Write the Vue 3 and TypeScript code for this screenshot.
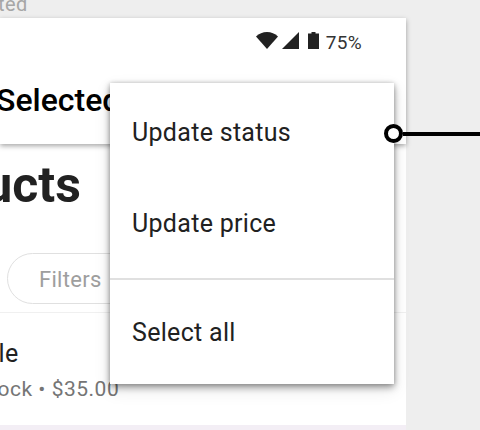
<script setup lang="ts">
const menuItems: string[] = ['Update status', 'Update price']
</script>

<template>
  <div class="page">
    <div class="caption">Selected</div>
    <div class="screen">
      <header class="appbar">
        <div class="status">
          <svg class="icon wifi" width="22" height="17" viewBox="0 0 22 17"><path d="M0 4.500C3 1.600 6.800 0 11 0s8 1.600 11 4.500L11 17z" fill="#212121" /></svg>
          <svg class="icon signal" width="18" height="17" viewBox="0 0 18 17"><path d="M17 0v17H0z" fill="#212121" /></svg>
          <svg class="icon battery" width="11" height="17" viewBox="0 0 11 17"><path d="M3.500 0h4v1.500H11V17H0V1.500h3.500z" fill="#212121" /></svg>
          <span class="pct">75%</span>
        </div>
        <div class="selected">Selected</div>
      </header>
      <h1 class="title">Products</h1>
      <div class="filterbar">
        <div class="pill">Filters</div>
      </div>
      <div class="row">
        <div class="name">Sample</div>
        <div class="meta">In stock • $35.00</div>
      </div>
      <div class="menu">
        <div v-for="m in menuItems" :key="m" class="item">{{ m }}</div>
        <div class="divider"></div>
        <div class="item last">Select all</div>
      </div>
    </div>
    <div class="callout">
      <span class="dot"></span>
      <span class="line"></span>
    </div>
    <div class="footer"></div>
  </div>
</template>

<style>
html, body { margin: 0; background: #eeeeee; }
</style>

<style scoped>
.page {
  position: relative;
  width: 480px;
  height: 430px;
  overflow: hidden;
  background: #eeeeee;
  font-family: Roboto, sans-serif;
}
.caption {
  height: 18px;
  box-sizing: border-box;
  margin-left: -53px;
  display: flex;
  align-items: flex-end;
  overflow: hidden;
  font-size: 20px;
  line-height: 20px;
  letter-spacing: 0.5px;
  color: #a6a6a6;
  padding-bottom: 4px;
}
.screen {
  position: relative;
  width: 406px;
  height: 407px;
  background: #fff;
}
.appbar {
  height: 126px;
  box-shadow: 0 2px 5px rgba(0, 0, 0, 0.35);
  display: flex;
  flex-direction: column;
}
.status {
  height: 46px;
  display: flex;
  align-items: center;
  justify-content: flex-end;
  padding-right: 44px;
}
.icon { margin-bottom: 1px; }
.signal { margin-left: 4px; }
.battery { margin-left: 8px; margin-right: 7px; }
.pct {
  margin-top: 2px;
  font-size: 19px;
  color: #333;
  letter-spacing: 0.3px;
}
.selected {
  margin-top: 18px;
  margin-left: -4px;
  font-size: 32px;
  line-height: 36px;
  font-weight: 500;
  color: #000;
  white-space: nowrap;
}
.title {
  margin: 13px 0 0 -122px;
  font-size: 50px;
  line-height: 56px;
  font-weight: 700;
  color: #212121;
}
.filterbar {
  height: 100px;
  box-sizing: border-box;
  border-bottom: 1px solid #f0f0f0;
  padding: 40px 0 0 7px;
}
.pill {
  width: 140px;
  height: 51px;
  box-sizing: border-box;
  border: 1px solid #e0e0e0;
  border-radius: 26px;
  padding-left: 31px;
  line-height: 51px;
  font-size: 22px;
  letter-spacing: 0.3px;
  color: #9e9e9e;
}
.row {
  padding-top: 25px;
}
.name {
  margin-left: -67px;
  font-size: 25px;
  line-height: 32px;
  letter-spacing: 0.3px;
  color: #212121;
}
.meta {
  margin: 5px 0 0 -45px;
  font-size: 21px;
  line-height: 28px;
  letter-spacing: 0.5px;
  color: #757575;
  white-space: nowrap;
}
.menu {
  position: absolute;
  left: 109.500px;
  top: 65px;
  width: 284px;
  height: 301px;
  background: #fff;
  box-shadow: 0 3px 7px rgba(0, 0, 0, 0.4), 0 0 4px rgba(0, 0, 0, 0.15), 0 6px 16px rgba(0, 0, 0, 0.1);
}
.item {
  height: 91px;
  padding-left: 22.500px;
  font-size: 25px;
  line-height: 100px;
  letter-spacing: 0.3px;
  color: #212121;
}
.divider {
  height: 2px;
  background: #e0e0e0;
  margin-top: 13px;
}
.item.last {
  line-height: 106px;
}
.callout {
  position: absolute;
  left: 384px;
  top: 124px;
  width: 96px;
  height: 19px;
  display: flex;
  align-items: center;
}
.dot {
  width: 19px;
  height: 19px;
  box-sizing: border-box;
  border: 4.500px solid #000;
  border-radius: 50%;
  background: #fff;
  flex: none;
}
.line {
  flex: 1;
  height: 4px;
  background: #000;
}
.footer {
  height: 5px;
  width: 406px;
  background: #f3eef5;
}
</style>
